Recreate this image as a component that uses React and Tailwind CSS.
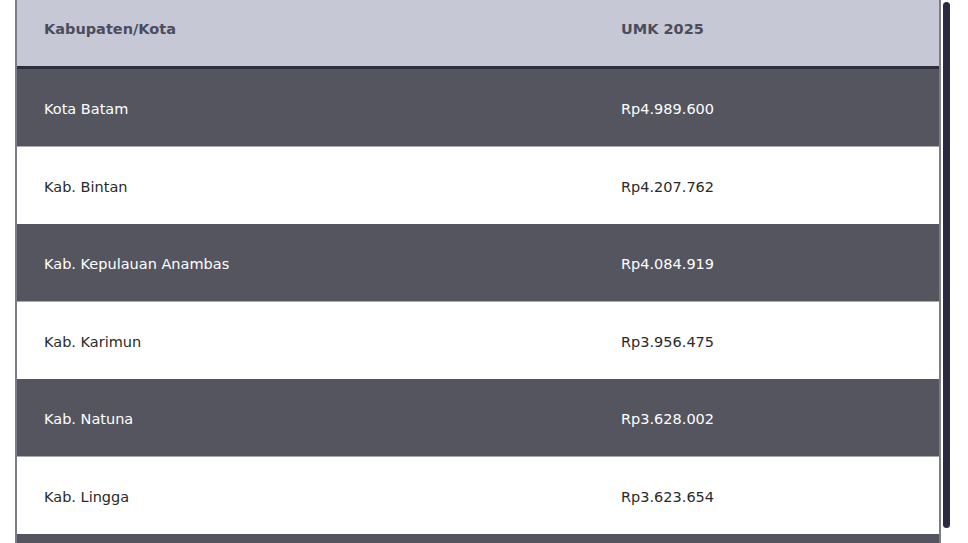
const rows = [
  ["Kota Batam", "Rp4.989.600"],
  ["Kab. Bintan", "Rp4.207.762"],
  ["Kab. Kepulauan Anambas", "Rp4.084.919"],
  ["Kab. Karimun", "Rp3.956.475"],
  ["Kab. Natuna", "Rp3.628.002"],
  ["Kab. Lingga", "Rp3.623.654"],
];

export default function App() {
  return (
    <div className="h-[543px] w-[968px] overflow-hidden bg-white font-['DejaVu_Sans',sans-serif]">
      <div className="flex items-start">
        <div className="ml-[15px] w-[926px] border-l-2 border-r-2 border-[#7d7d8a]">
          <div className="flex h-[69px] items-start bg-[#c6c8d5] pt-[19px] text-[14.5px] font-semibold text-[#4b4c5c] border-b-[3px] border-[#2d2e40]">
            <div className="w-[604px] pl-[27px]">Kabupaten/Kota</div>
            <div>UMK 2025</div>
          </div>
          {rows.map(([name, umk], i) => (
            <div
              key={name}
              className={
                i % 2 === 0
                  ? "flex h-[78px] items-center border-b border-[#a9a9b2] bg-[#55555f] pt-1 text-[14.5px] text-white"
                  : "flex h-[77px] items-center bg-white pt-1 text-[14.5px] text-[#2a2a2a]"
              }
            >
              <div className="w-[604px] pl-[27px]">{name}</div>
              <div>{umk}</div>
            </div>
          ))}
          <div className="h-[40px] bg-[#55555f]" />
        </div>
        <div className="ml-[2px] mt-[2px] h-[526px] w-[7px] rounded-full bg-[#2a2b40]" />
      </div>
    </div>
  );
}
